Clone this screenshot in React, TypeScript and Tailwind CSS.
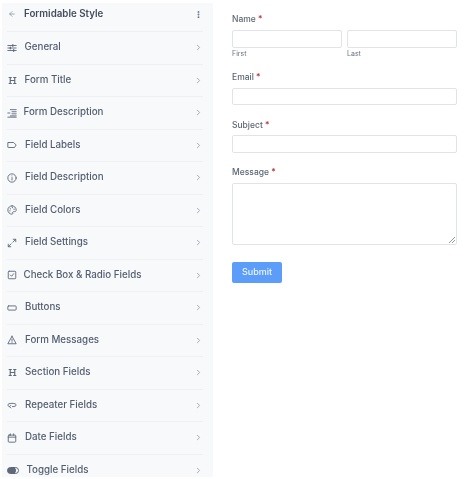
import type { ReactNode } from "react";
import { ArrowLeft, ChevronRight, EllipsisVertical } from "lucide-react";

const ic = "w-[10px] h-[10px] shrink-0 text-[#5f6979]";

function Svg({ children, className = ic }: { children: ReactNode; className?: string }) {
  return (
    <svg viewBox="0 0 24 24" fill="none" stroke="currentColor" strokeWidth={2.2} strokeLinecap="round" strokeLinejoin="round" className={className}>
      {children}
    </svg>
  );
}

const HeadingIcon = () => (
  <Svg className="w-[9px] h-[9px] ml-[1px] shrink-0 text-[#5f6979]">
    <path d="M6 4v16M18 4v16M6 12h12M3 4h6M15 4h6M3 20h6M15 20h6" strokeWidth={3} />
  </Svg>
);

const items: { label: string; icon: ReactNode; textMargin: string }[] = [
  {
    label: "General",
    textMargin: "ml-[7.500px]",
    icon: (
      <Svg>
        <path d="M2 6h20M2 12h20M2 18h20" />
        <path d="M14 4v4M8 10v4M16 16v4" strokeWidth={3} />
      </Svg>
    ),
  },
  { label: "Form Title", textMargin: "ml-[7.500px]", icon: <HeadingIcon /> },
  {
    label: "Form Description",
    textMargin: "ml-[6.500px]",
    icon: (
      <Svg>
        <path d="M8 4h14M12 9h10M2 12h5M12 14h10M8 19h14M2 22h20" />
      </Svg>
    ),
  },
  {
    label: "Field Labels",
    textMargin: "ml-[8px]",
    icon: (
      <Svg>
        <path d="M3 6h13l6 6-4 6H3a1 1 0 0 1-1-1V7a1 1 0 0 1 1-1z" />
      </Svg>
    ),
  },
  {
    label: "Field Description",
    textMargin: "ml-[8px]",
    icon: (
      <Svg>
        <circle cx="12" cy="12" r="10" />
        <path d="M12 11v6M12 7h.01" />
      </Svg>
    ),
  },
  {
    label: "Field Colors",
    textMargin: "ml-[8px]",
    icon: (
      <Svg>
        <path d="M12 2a10 10 0 1 0 0 20c2 0 2-2 1.500-3-.7-1.500.500-3 2-3h3c2 0 3.500-1.500 3.500-4 0-5.500-4.500-10-10-10z" />
        <path d="M8 9h.01M13 6h.01M17 10h.01M7 14h.01" strokeWidth={3} />
      </Svg>
    ),
  },
  {
    label: "Field Settings",
    textMargin: "ml-[8px]",
    icon: (
      <Svg>
        <path d="M15 3h6v6M21 3l-7 7M9 21H3v-6M3 21l7-7" />
      </Svg>
    ),
  },
  {
    label: "Check Box & Radio Fields",
    textMargin: "ml-[6.500px]",
    icon: (
      <Svg>
        <rect x="3" y="3" width="18" height="18" rx="2" />
        <path d="M8 12l3 3 5-6" />
      </Svg>
    ),
  },
  {
    label: "Buttons",
    textMargin: "ml-[8px]",
    icon: (
      <Svg>
        <rect x="2" y="7" width="20" height="10" rx="2" />
      </Svg>
    ),
  },
  {
    label: "Form Messages",
    textMargin: "ml-[8px]",
    icon: (
      <Svg>
        <path d="M12 3L2 21h20L12 3z" />
        <path d="M12 10v5M12 18h.01" />
      </Svg>
    ),
  },
  { label: "Section Fields", textMargin: "ml-[8px]", icon: <HeadingIcon /> },
  {
    label: "Repeater Fields",
    textMargin: "ml-[8px]",
    icon: (
      <Svg>
        <path d="M6 16c-3-1-4-3-4-4 0-2 3-4 10-4s10 2 10 4-3 4-9 4" />
        <path d="M9 13l-3 3 3 3" />
      </Svg>
    ),
  },
  {
    label: "Date Fields",
    textMargin: "ml-[8px]",
    icon: (
      <Svg>
        <rect x="3" y="5" width="18" height="17" rx="2" />
        <path d="M8 2v4M16 2v4M3 10h18" />
      </Svg>
    ),
  },
  {
    label: "Toggle Fields",
    textMargin: "ml-[7.500px]",
    icon: (
      <svg viewBox="0 0 24 14" className="w-[12px] h-[7px] shrink-0 text-[#5f6979]">
        <rect x="1" y="1" width="22" height="12" rx="6" fill="none" stroke="currentColor" strokeWidth={2} />
        <path d="M7 1h5a6 6 0 0 1 0 12H7A6 6 0 0 1 7 1z" fill="currentColor" />
      </svg>
    ),
  },
];

function Label({ children }: { children: ReactNode }) {
  return (
    <div className="text-[8.500px] font-medium text-[#5c6675] leading-[12px]">
      {children} <span className="text-[#b4323c]">*</span>
    </div>
  );
}

const inputCls = "block w-full h-[17.500px] rounded-[2px] border border-[#e1e3e8] bg-white";

export default function App() {
  return (
    <div className="flex w-[474px] h-[479px] overflow-hidden bg-white font-['Inter',sans-serif] blur-[0.35px]">
      <aside className="w-[211px] h-[474px] mt-[3px] ml-[2px] shrink-0 overflow-hidden bg-[#f8f9fb] pl-[5px] pr-[10px]">
        <div className="flex items-center h-[29px] pb-[6px] pl-[1px] border-b border-[#eff0f3]">
          <ArrowLeft className="w-[8px] h-[8px] text-[#7b8494]" strokeWidth={2} />
          <span className="ml-[8px] flex-1 text-[9.750px] font-semibold text-[#434d5e]">Formidable Style</span>
          <EllipsisVertical className="w-[9px] h-[9px] text-[#667085]" strokeWidth={3} />
        </div>
        {items.map((item) => (
          <div key={item.label} className="flex items-center h-[32.500px] border-b border-[#eff0f3]">
            {item.icon}
            <span className={`${item.textMargin} flex-1 text-[9.750px] font-medium text-[#535d6d] whitespace-nowrap`}>{item.label}</span>
            <ChevronRight className="w-[9px] h-[9px] text-[#8a93a2]" strokeWidth={2} />
          </div>
        ))}
      </aside>
      <main className="w-[225px] ml-[19px] pt-[13px]">
        <Label>Name</Label>
        <div className="flex gap-[5px] mt-[5px]">
          <div className="flex-1">
            <div className={inputCls} />
            <div className="text-[7px] text-[#6b7482] leading-[9px] mt-[1px]">First</div>
          </div>
          <div className="flex-1">
            <div className={inputCls} />
            <div className="text-[7px] text-[#6b7482] leading-[9px] mt-[1px]">Last</div>
          </div>
        </div>
        <div className="mt-[13px]">
          <Label>Email</Label>
        </div>
        <div className={`${inputCls} mt-[5px]`} />
        <div className="mt-[13.500px]">
          <Label>Subject</Label>
        </div>
        <div className={`${inputCls} mt-[4.500px]`} />
        <div className="mt-[13.500px]">
          <Label>Message</Label>
        </div>
        <div className="relative h-[62px] mt-[5px] rounded-[2px] border border-[#e1e3e8] bg-white">
          <svg viewBox="0 0 8 8" className="absolute right-[0px] bottom-[0px] w-[8px] h-[8px] text-[#777f8c]" stroke="currentColor" strokeWidth={0.8}>
            <path d="M1 7l6-6M4 7l3-3" />
          </svg>
        </div>
        <button type="button" className="block w-[50px] h-[21px] mt-[16.500px] rounded-[2px] bg-[#5b9df9] text-[9px] font-medium text-white/90">
          Submit
        </button>
      </main>
    </div>
  );
}
